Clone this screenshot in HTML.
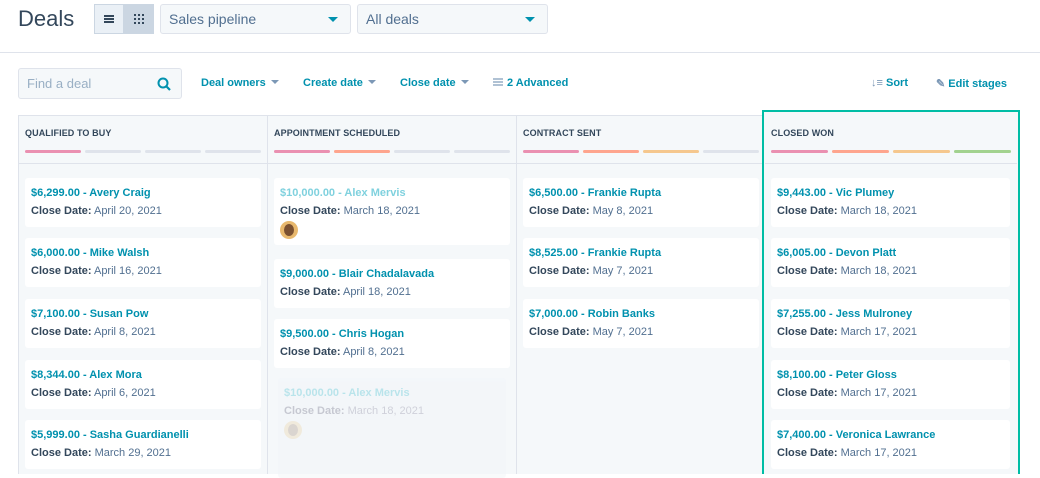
<!DOCTYPE html>
<html><head><meta charset="utf-8"><style>
*{box-sizing:border-box;margin:0;padding:0}
body{width:1040px;height:474px;overflow:hidden;background:#fff;font-family:"Liberation Sans",sans-serif;position:relative;color:#33475b}
.a{position:absolute}
.title{left:18px;top:4px;font-size:22px;color:#33475b;line-height:30px}
.tg{top:4px;height:30px;width:30px;border:1px solid #cbd6e2;background:#eaf0f6;display:flex;align-items:center;justify-content:center}
.dd{top:4px;height:30px;border:1px solid #dfe3eb;background:#f5f8fa;border-radius:3px;font-size:14px;color:#516f90;padding:0 8px;line-height:28px}
.car{position:absolute;right:12px;top:12px;width:0;height:0;border-left:5px solid transparent;border-right:5px solid transparent;border-top:5px solid #0091ae}
.f{top:77px;font-size:11px;font-weight:bold;color:#0091ae}
.sc{display:inline-block;margin-left:5px;vertical-align:2px;width:0;height:0;border-left:4px solid transparent;border-right:4px solid transparent;border-top:4px solid #7c98b6}
.col{top:115px;height:359px;background:#f5f8fa;border:1px solid #dfe3eb;border-bottom:none}
.hd{position:absolute;left:0;right:0;top:0;height:48px;border-bottom:1px solid #dfe3eb}
.ht{position:absolute;left:6px;top:12px;font-size:9px;font-weight:bold;color:#33475b;letter-spacing:.1px}
.bars{position:absolute;left:6px;right:6px;top:34px;display:flex;gap:4px}
.bars i{flex:1;height:3px;border-radius:2px;background:#dfe3eb}
.card{position:absolute;left:6px;right:6px;height:49px;background:#fff;border-radius:3px;padding:0 6px}
.n{position:absolute;top:9px;left:6px;font-size:11px;font-weight:bold;color:#0091ae;white-space:nowrap}
.d{position:absolute;top:27px;left:6px;font-size:11px;color:#516f90;white-space:nowrap}
.d b{color:#33475b}
.av{position:absolute;left:6px;top:43px;width:18px;height:18px;border-radius:50%;background:#e8b86d;overflow:hidden}
.av:after{content:"";position:absolute;left:4px;top:3px;width:10px;height:12px;border-radius:50%;background:#7a5030}
</style></head><body>
<div class="a title">Deals</div>
<div class="a tg" style="left:94px;background:#eaf0f6"><svg width="10" height="10"><rect y="1" width="10" height="2" fill="#33475b"/><rect y="4" width="10" height="2" fill="#33475b"/><rect y="7" width="10" height="2" fill="#33475b"/></svg></div>
<div class="a tg" style="left:124px;background:#cbd6e2"><svg width="10" height="10" fill="#33475b"><rect x="0" y="0" width="2" height="2"/><rect x="4" y="0" width="2" height="2"/><rect x="8" y="0" width="2" height="2"/><rect x="0" y="4" width="2" height="2"/><rect x="4" y="4" width="2" height="2"/><rect x="8" y="4" width="2" height="2"/><rect x="0" y="8" width="2" height="2"/><rect x="4" y="8" width="2" height="2"/><rect x="8" y="8" width="2" height="2"/></svg></div>
<div class="a dd" style="left:160px;width:191px">Sales pipeline<span class="car"></span></div>
<div class="a dd" style="left:357px;width:191px">All deals<span class="car"></span></div>
<div class="a" style="left:0;right:0;top:52px;height:1px;background:#dfe3eb"></div>
<div class="a dd" style="left:18px;top:68px;width:164px;height:31px;line-height:29px;font-size:13px;color:#99afc4">Find a deal
<svg style="position:absolute;right:10px;top:8px" width="14" height="14"><circle cx="6" cy="6" r="4.5" fill="none" stroke="#0091ae" stroke-width="2"/><line x1="9" y1="9" x2="13" y2="13" stroke="#0091ae" stroke-width="2.2"/></svg></div>
<div class="a f" style="left:201px">Deal owners<span class="sc"></span></div>
<div class="a f" style="left:303px">Create date<span class="sc"></span></div>
<div class="a f" style="left:400px">Close date<span class="sc"></span></div>
<div class="a f" style="left:493px"><svg width="10" height="10" style="vertical-align:-1px;margin-right:4px" stroke="#7c98b6" stroke-width="1.2"><line x1="0" y1="2" x2="10" y2="2"/><line x1="0" y1="5" x2="10" y2="5"/><line x1="0" y1="8" x2="10" y2="8"/></svg>2 Advanced</div>
<div class="a f" style="left:871px"><span style="color:#7c98b6">↓&#8801;</span> Sort</div>
<div class="a f" style="left:936px"><span style="color:#7c98b6">✎</span> Edit stages</div>

<div class="a col" style="left:18px;width:250px">
<div class="hd"><div class="ht">QUALIFIED TO BUY</div><div class="bars"><i style="background:#ea90b1"></i><i></i><i></i><i></i></div></div>
<div class="card" style="top:62px"><div class="n">$6,299.00 - Avery Craig</div><div class="d"><b>Close Date:</b> April 20, 2021</div></div>
<div class="card" style="top:122px"><div class="n">$6,000.00 - Mike Walsh</div><div class="d"><b>Close Date:</b> April 16, 2021</div></div>
<div class="card" style="top:183px"><div class="n">$7,100.00 - Susan Pow</div><div class="d"><b>Close Date:</b> April 8, 2021</div></div>
<div class="card" style="top:244px"><div class="n">$8,344.00 - Alex Mora</div><div class="d"><b>Close Date:</b> April 6, 2021</div></div>
<div class="card" style="top:304px"><div class="n">$5,999.00 - Sasha Guardianelli</div><div class="d"><b>Close Date:</b> March 29, 2021</div></div>
</div>
<div class="a col" style="left:267px;width:250px">
<div class="hd"><div class="ht">APPOINTMENT SCHEDULED</div><div class="bars"><i style="background:#ea90b1"></i><i style="background:#fea58e"></i><i></i><i></i></div></div>
<div class="card" style="top:62px;height:67px"><div class="n" style="color:#7fd1de">$10,000.00 - Alex Mervis</div><div class="d"><b>Close Date:</b> March 18, 2021</div><div class="av"></div></div>
<div class="card" style="top:143px"><div class="n">$9,000.00 - Blair Chadalavada</div><div class="d"><b>Close Date:</b> April 18, 2021</div></div>
<div class="card" style="top:203px"><div class="n">$9,500.00 - Chris Hogan</div><div class="d"><b>Close Date:</b> April 8, 2021</div></div>
<div class="card" style="top:262px;left:10px;right:10px;height:100px;background:#f2f6f9;opacity:.5"><div class="n" style="color:#7fd1de">$10,000.00 - Alex Mervis</div><div class="d" style="color:#aab"><b style="color:#99a">Close Date:</b> March 18, 2021</div><div class="av" style="opacity:.4"></div></div>
</div>
<div class="a col" style="left:516px;width:250px">
<div class="hd"><div class="ht">CONTRACT SENT</div><div class="bars"><i style="background:#ea90b1"></i><i style="background:#fea58e"></i><i style="background:#f5c78e"></i><i></i></div></div>
<div class="card" style="top:62px"><div class="n">$6,500.00 - Frankie Rupta</div><div class="d"><b>Close Date:</b> May 8, 2021</div></div>
<div class="card" style="top:122px"><div class="n">$8,525.00 - Frankie Rupta</div><div class="d"><b>Close Date:</b> May 7, 2021</div></div>
<div class="card" style="top:183px"><div class="n">$7,000.00 - Robin Banks</div><div class="d"><b>Close Date:</b> May 7, 2021</div></div>
</div>
<div class="a col" style="left:762px;width:258px;top:110px;height:364px;border:2px solid #00bda5;border-bottom:none;padding:0">
<div class="hd" style="top:4px;left:1px;right:1px"><div class="ht">CLOSED WON</div><div class="bars"><i style="background:#ea90b1"></i><i style="background:#fea58e"></i><i style="background:#f5c78e"></i><i style="background:#a2d28f"></i></div></div>
<div class="card" style="top:66px;left:7px;right:8px"><div class="n">$9,443.00 - Vic Plumey</div><div class="d"><b>Close Date:</b> March 18, 2021</div></div>
<div class="card" style="top:126px;left:7px;right:8px"><div class="n">$6,005.00 - Devon Platt</div><div class="d"><b>Close Date:</b> March 18, 2021</div></div>
<div class="card" style="top:187px;left:7px;right:8px"><div class="n">$7,255.00 - Jess Mulroney</div><div class="d"><b>Close Date:</b> March 17, 2021</div></div>
<div class="card" style="top:248px;left:7px;right:8px"><div class="n">$8,100.00 - Peter Gloss</div><div class="d"><b>Close Date:</b> March 17, 2021</div></div>
<div class="card" style="top:308px;left:7px;right:8px"><div class="n">$7,400.00 - Veronica Lawrance</div><div class="d"><b>Close Date:</b> March 17, 2021</div></div>
</div>
</body></html>
